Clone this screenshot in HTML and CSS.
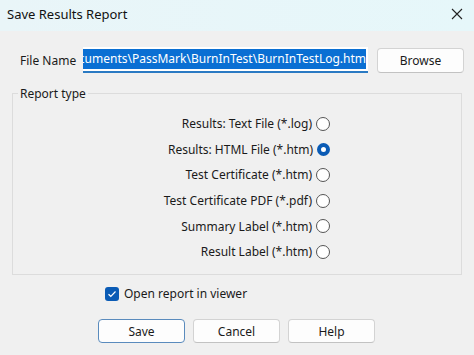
FILE: index.html
```html
<!DOCTYPE html>
<html>
<head>
<meta charset="utf-8">
<link rel="stylesheet" href="styles.css">
</head>
<body>
<div class="window">
  <div class="titlebar">
    <span class="title">Save Results Report</span>
    <svg class="close" width="12" height="12" viewBox="0 0 12 12"><path d="M1 1L11 11M11 1L1 11" stroke="#222" stroke-width="1.1" fill="none"/></svg>
  </div>
  <div class="content">
    <div class="file-row">
      <span class="label">File Name</span>
      <div class="input"><span class="sel">cuments\PassMark\BurnInTest\BurnInTestLog.htm</span></div>
      <button class="btn browse">Browse</button>
    </div>
    <fieldset class="group">
      <legend>Report type</legend>
      <div class="radios">
        <label class="radio"><span>Results: Text File (*.log)</span><i class="circle"></i></label>
        <label class="radio"><span>Results: HTML File (*.htm)</span><i class="circle on"></i></label>
        <label class="radio"><span>Test Certificate (*.htm)</span><i class="circle"></i></label>
        <label class="radio"><span>Test Certificate PDF (*.pdf)</span><i class="circle"></i></label>
        <label class="radio"><span>Summary Label (*.htm)</span><i class="circle"></i></label>
        <label class="radio"><span>Result Label (*.htm)</span><i class="circle"></i></label>
      </div>
    </fieldset>
    <label class="check"><i class="box"><svg width="10" height="8" viewBox="0 0 10 8"><path d="M1.5 4.2L3.8 6.3L8.5 1.5" stroke="#fff" stroke-width="1.2" fill="none"/></svg></i><span>Open report in viewer</span></label>
    <div class="buttons">
      <button class="btn default">Save</button>
      <button class="btn">Cancel</button>
      <button class="btn">Help</button>
    </div>
  </div>
</div>
</body>
</html>
```
FILE: styles.css
```css
html, body {
  margin: 0;
  padding: 0;
}
body {
  width: 474px;
  height: 355px;
  overflow: hidden;
  background: #f0f0f0;
  font-family: "Noto Sans", "Open Sans", sans-serif;
  font-size: 12px;
  color: #1a1a1a;
}
.window {
  width: 474px;
  height: 355px;
  display: flex;
  flex-direction: column;
}
.titlebar {
  height: 31px;
  background: linear-gradient(to right, #e9f5f8, #e6f7fa);
  display: flex;
  align-items: center;
  justify-content: space-between;
  padding: 0 11px 0 7px;
  box-sizing: border-box;
}
.title {
  font-size: 13px;
  color: #111;
  margin-top: -3px;
}
.close {
  margin-top: -3px;
}
.content {
  flex: 1;
  display: flex;
  flex-direction: column;
}
.file-row {
  display: flex;
  align-items: center;
  height: 28px;
  margin-top: 15px;
  padding-left: 20px;
}
.label {
  width: 63px;
}
.input {
  width: 285px;
  height: 26px;
  box-sizing: border-box;
  background: #fff;
  border-bottom: 2px solid #2a7ac3;
  overflow: hidden;
  display: flex;
  align-items: center;
  justify-content: flex-end;
  padding-right: 2px;
}
.sel {
  background: #0a6fd3;
  color: #fff;
  white-space: nowrap;
  line-height: 20px;
  font-size: 12px;
}
.btn {
  font-family: inherit;
  font-size: 12px;
  color: #1a1a1a;
  background: #fdfdfd;
  border: 1px solid #d3d3d3;
  border-bottom-color: #c2c2c2;
  border-radius: 4px;
  width: 87px;
  height: 25px;
  padding: 0;
}
.browse {
  margin-left: 9px;
}
.group {
  margin: 11px 12px 0 12px;
  border: 1px solid #dcdcdc;
  border-radius: 0;
  padding: 0;
  height: 190px;
  box-sizing: border-box;
}
.group legend {
  padding: 0 2px;
  margin-left: 5px;
}
.radios {
  display: flex;
  flex-direction: column;
  width: 317px;
  padding-top: 9px;
}
.radio {
  display: flex;
  justify-content: flex-end;
  align-items: center;
  height: 25.6px;
  gap: 4px;
}
.circle {
  width: 12px;
  height: 12px;
  border: 1px solid #555;
  border-radius: 50%;
  background: #fff;
  display: block;
}
.circle.on {
  width: 5px;
  height: 5px;
  border: 4.5px solid #0a5bb5;
  background: #fff;
}
.check {
  display: flex;
  align-items: center;
  margin: 11px 0 0 105px;
  gap: 5px;
  height: 15px;
}
.box {
  width: 14px;
  height: 14px;
  border-radius: 3px;
  background: #0a5bb5;
  display: flex;
  align-items: center;
  justify-content: center;
}
.buttons {
  display: flex;
  gap: 8px;
  margin: 18px 0 0 98px;
}
.buttons .btn {
  height: 24px;
}
.btn.default {
  border: 1px solid #5a8bbd;
}
```
